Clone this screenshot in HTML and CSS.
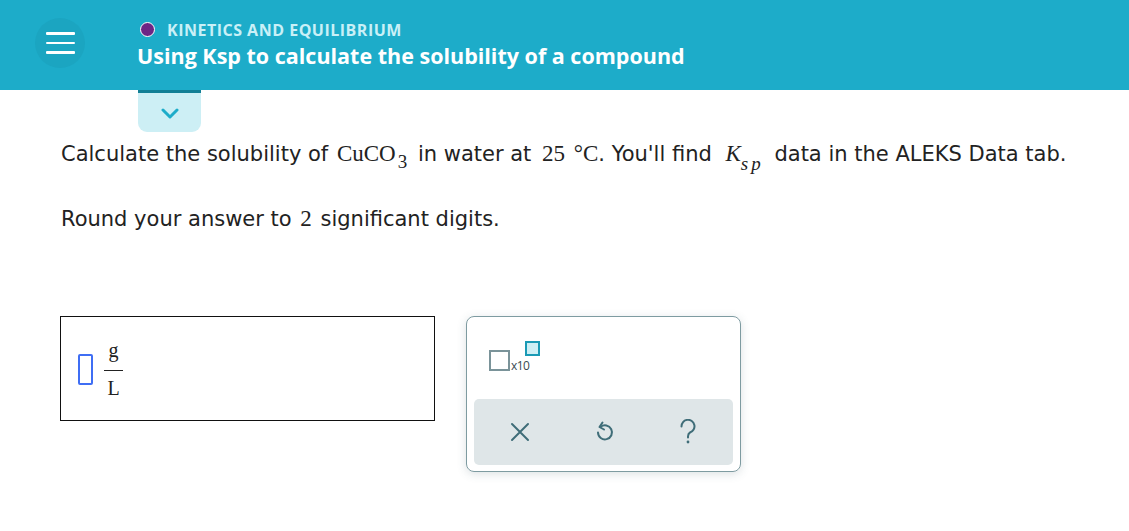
FILE: index.html
```html
<!DOCTYPE html>
<html>
<head>
<meta charset="utf-8">
<link rel="stylesheet" href="styles.css">
</head>
<body>
<header class="topbar">
  <div class="menu-btn">
    <span></span><span></span><span></span>
  </div>
  <div class="titles">
    <div class="topic"><span class="dot"></span>KINETICS AND EQUILIBRIUM</div>
    <div class="title">Using Ksp to calculate the solubility of a compound</div>
  </div>
</header>
<div class="tab-row">
  <div class="tab">
    <svg width="20" height="12" viewBox="0 0 20 12"><path d="M3 2 L10 9 L17 2" fill="none" stroke="#1dacc9" stroke-width="3" stroke-linecap="round" stroke-linejoin="round"/></svg>
  </div>
</div>
<main class="content">
  <p class="q">Calculate the solubility of <span class="m cuco">CuCO<sub>3</sub></span> in water at <span class="m temp">25 <span class="deg">°C</span></span>. You'll find <span class="m ksp"><i>K</i><sub class="sp"><i>s</i><i>p</i></sub></span> data in the ALEKS Data tab.</p>
  <p class="q q2">Round your answer to <span class="m">2</span> significant digits.</p>
  <div class="answer-row">
    <div class="answer">
      <span class="slot"></span>
      <span class="frac"><span class="num">g</span><span class="den">L</span></span>
    </div>
    <div class="keypad">
      <div class="tools">
        <span class="sci"><span class="base"></span><span class="x10">x10</span><span class="exp"></span></span>
      </div>
      <div class="actions">
        <svg width="22" height="22" viewBox="0 0 22 22"><path d="M3 3 L19 19 M19 3 L3 19" stroke="#3f6d78" stroke-width="2" stroke-linecap="round" fill="none"/></svg>
        <svg width="22" height="24" viewBox="0 0 22 24"><path d="M7.5 7 A7 7 0 1 1 5 12.5" stroke="#3f6d78" stroke-width="2" stroke-linecap="round" fill="none"/><path d="M9.5 2.5 L6.5 7 L11 9.5" stroke="#3f6d78" stroke-width="2" stroke-linecap="round" stroke-linejoin="round" fill="none"/></svg>
        <svg width="20" height="26" viewBox="0 0 20 26"><path d="M3.5 7.5 A6.5 6.5 0 1 1 12 13.5 C10.5 14.3 10 15.5 10 17.5 L10 18.5" stroke="#3f6d78" stroke-width="2" stroke-linecap="round" fill="none"/><circle cx="10" cy="23" r="1.4" fill="#3f6d78"/></svg>
      </div>
    </div>
  </div>
</main>
</body>
</html>
```
FILE: styles.css
```css
html, body { margin: 0; padding: 0; background: #fff; }
body { width: 1129px; height: 531px; overflow: hidden; font-family: "DejaVu Sans", Verdana, sans-serif; color: #222; }

.topbar {
  height: 90px;
  background: #1dacc9;
  display: flex;
  align-items: center;
}
.menu-btn {
  width: 50px; height: 50px;
  border-radius: 50%;
  background: #1ba5c1;
  margin-left: 35px;
  margin-top: -4px;
  display: flex; flex-direction: column; align-items: center; justify-content: center;
  gap: 7px;
}
.menu-btn span { display: block; width: 29px; height: 2.5px; background: #fff; border-radius: 1px; }
.titles { margin-left: 52px; margin-top: -2px; font-family: "Open Sans", "Lato", sans-serif; font-weight: 700; }
.topic {
  display: flex; align-items: center;
  color: #c9f0f7;
  font-size: 16px;
  letter-spacing: 0.5px;
  height: 22px;
}
.dot {
  width: 13px; height: 13px; border-radius: 50%;
  background: #6d2585; border: 1.5px solid #fff;
  margin-left: 3px; margin-right: 12px;
}
.title { color: #fff; font-size: 21.5px; letter-spacing: 0; margin-top: 0; }

.tab-row { padding-left: 138px; }
.tab {
  width: 63px; height: 39px;
  background: #cdeff5;
  border-top: 3px solid #127f95;
  border-radius: 0 0 9px 9px;
  display: flex; align-items: center; justify-content: center;
}
.tab svg { margin-top: 2px; }

.content { padding-left: 61px; }
.q { margin: 0; font-size: 21px; line-height: 26px; }
.q:first-child { margin-top: 9px; }
.q2 { margin-top: 39px; }
.m { font-family: "Liberation Serif", "Times New Roman", serif; font-size: 23px; margin: 0 2px; }
.m sub { font-size: 19px; vertical-align: -7px; line-height: 0; margin-left: 2px; }
.m.cuco { margin: 0 4px 0 2px; }
.m.temp { margin: 0 0 0 4px; }
.m .deg { margin-left: 3px; }
.m.ksp { margin: 0 4px 0 7px; }
.m sub.sp { vertical-align: -9px; margin-left: 0; }
.m sub.sp i { margin-right: 3px; }

.answer-row { display: flex; align-items: flex-start; margin-top: 84px; margin-left: -1px; gap: 31px; }
.answer {
  width: 373px; height: 103px;
  border: 1px solid #111;
  display: flex; align-items: center;
}
.slot {
  width: 11px; height: 27px;
  border: 2px solid #3f6ef4;
  border-radius: 2px;
  margin-left: 17px;
  margin-top: 1px;
}
.frac {
  display: inline-flex; flex-direction: column; align-items: center;
  font-family: "Liberation Serif", "Times New Roman", serif; font-size: 20px;
  margin-left: 11px; margin-top: 0;
}
.num { line-height: 22px; padding-bottom: 9px; border-bottom: 1.5px solid #222; width: 19px; text-align: center; }
.den { line-height: 22px; padding-top: 6px; }

.keypad {
  width: 275px; height: 156px;
  border: 1px solid #7e9ba1;
  border-radius: 8px;
  box-shadow: 0 2px 10px rgba(60, 90, 100, 0.18);
  display: flex; flex-direction: column;
  box-sizing: border-box;
  padding: 0 7px 6px 7px;
}
.tools { flex: 1; }
.sci { position: relative; display: inline-block; margin-left: 15px; margin-top: 33px; height: 24px; width: 60px; }
.base {
  position: absolute; left: 0; top: 0;
  width: 17px; height: 17px;
  border: 2px solid #7a9399;
}
.x10 {
  position: absolute; left: 22px; top: 7px;
  font-family: "Open Sans", "Lato", sans-serif; font-size: 12px; color: #3a4a50; letter-spacing: -0.6px;
}
.exp {
  position: absolute; left: 36px; top: -9px;
  width: 11px; height: 11px;
  border: 2px solid #1a9ab5;
  background: #cdeff5;
}
.actions {
  height: 66px;
  background: #dfe6e8;
  border-radius: 5px;
  display: flex; align-items: center; justify-content: space-around;
  padding: 0 4px;
}
```
